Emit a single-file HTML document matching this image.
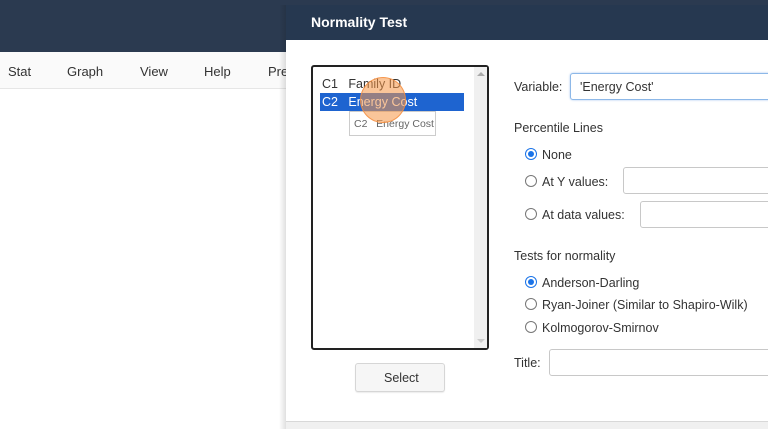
<!DOCTYPE html>
<html><head><style>
*{margin:0;padding:0;box-sizing:border-box}
body{width:768px;height:429px;overflow:hidden;background:#fff;font-family:"Liberation Sans",sans-serif;position:relative;color:#333}
.a{position:absolute}
.t{font-size:12.5px;color:#333;white-space:nowrap}
.rad{position:absolute;width:12px;height:12px;border:1px solid #777;border-radius:50%;background:#fff}
.rad.on{border-color:#1a73e8}
.rad.on:after{content:"";position:absolute;left:2px;top:2px;width:6px;height:6px;border-radius:50%;background:#1a73e8}
.inp{position:absolute;border:1px solid #c8c8c8;border-radius:3px;background:#fff}
</style></head><body>
<div class="a" style="left:0;top:0;width:768px;height:52px;background:#2b3a50"></div>
<div class="a" style="left:0;top:52px;width:290px;height:37px;background:#fafafa;border-bottom:1px solid #e6e6e6"></div>
<div class="a t" style="left:8px;top:64px;font-size:13px">Stat</div>
<div class="a t" style="left:67px;top:64px;font-size:13px">Graph</div>
<div class="a t" style="left:140px;top:64px;font-size:13px">View</div>
<div class="a t" style="left:204px;top:64px;font-size:13px">Help</div>
<div class="a t" style="left:268px;top:64px;font-size:13px">Pre</div>
<div class="a" style="left:279px;top:5px;width:7px;height:424px;background:linear-gradient(to right,rgba(0,0,0,0),rgba(0,0,0,.12))"></div>
<div class="a" style="left:286px;top:5px;width:482px;height:424px;background:#fff"></div>
<div class="a" style="left:286px;top:5px;width:482px;height:35px;background:#263850"></div>
<div class="a" style="left:311px;top:14px;color:#fff;font-weight:bold;font-size:14px">Normality Test</div>
<div class="a" style="left:286px;top:421px;width:482px;height:8px;background:#f0f0f0;border-top:1px solid #d8d8d8"></div>
<!-- list -->
<div class="a" style="left:311px;top:65px;width:178px;height:285px;border:2px solid #222;border-radius:3px;background:#fff"></div>
<div class="a" style="left:474px;top:67px;width:13px;height:281px;background:#f0f0f0"></div>
<div class="a" style="left:477px;top:72px;width:0;height:0;border-left:4px solid transparent;border-right:4px solid transparent;border-bottom:4px solid #aaa"></div>
<div class="a" style="left:477px;top:339px;width:0;height:0;border-left:4px solid transparent;border-right:4px solid transparent;border-top:4px solid #ccc"></div>
<div class="a t" style="left:322px;top:77px">C1&nbsp;&nbsp;&nbsp;Family ID</div>
<div class="a" style="left:320px;top:93px;width:144px;height:18px;background:#1e64d0"></div>
<div class="a t" style="left:322px;top:95px;color:#fff">C2&nbsp;&nbsp;&nbsp;Energy Cost</div>
<div class="a" style="left:349px;top:111px;width:87px;height:25px;border:1px solid #ccc;background:#fff"></div>
<div class="a t" style="left:354px;top:118px;font-size:10.5px;color:#666">C2&nbsp;&nbsp;&nbsp;Energy Cost</div>
<div class="a" style="left:360px;top:77px;width:46px;height:46px;border-radius:50%;background:rgba(245,150,70,.55);border:1.5px solid rgba(245,140,60,.8)"></div>
<div class="a" style="left:355px;top:363px;width:90px;height:29px;border:1px solid #d6d6d6;border-radius:3px;background:#f6f6f6;box-shadow:0 1px 1px rgba(0,0,0,.08)"></div>
<div class="a t" style="left:384px;top:371px">Select</div>
<!-- right -->
<div class="a t" style="left:514px;top:80px">Variable:</div>
<div class="inp" style="left:570px;top:73px;width:210px;height:27px;border-color:#8db8e8;box-shadow:0 0 2px #a9c8ee"></div>
<div class="a t" style="left:580px;top:80px">'Energy Cost'</div>
<div class="a t" style="left:514px;top:121px">Percentile Lines</div>
<div class="rad on" style="left:525px;top:148px"></div><div class="a t" style="left:542px;top:148px">None</div>
<div class="rad" style="left:525px;top:175px"></div><div class="a t" style="left:542px;top:175px">At Y values:</div>
<div class="inp" style="left:623px;top:167px;width:160px;height:27px"></div>
<div class="rad" style="left:525px;top:208px"></div><div class="a t" style="left:542px;top:208px">At data values:</div>
<div class="inp" style="left:640px;top:201px;width:140px;height:27px"></div>
<div class="a t" style="left:514px;top:249px">Tests for normality</div>
<div class="rad on" style="left:525px;top:276px"></div><div class="a t" style="left:542px;top:276px">Anderson-Darling</div>
<div class="rad" style="left:525px;top:298px"></div><div class="a t" style="left:542px;top:298px">Ryan-Joiner (Similar to Shapiro-Wilk)</div>
<div class="rad" style="left:525px;top:321px"></div><div class="a t" style="left:542px;top:321px">Kolmogorov-Smirnov</div>
<div class="a t" style="left:514px;top:356px">Title:</div>
<div class="inp" style="left:549px;top:349px;width:230px;height:27px"></div>
</body></html>
